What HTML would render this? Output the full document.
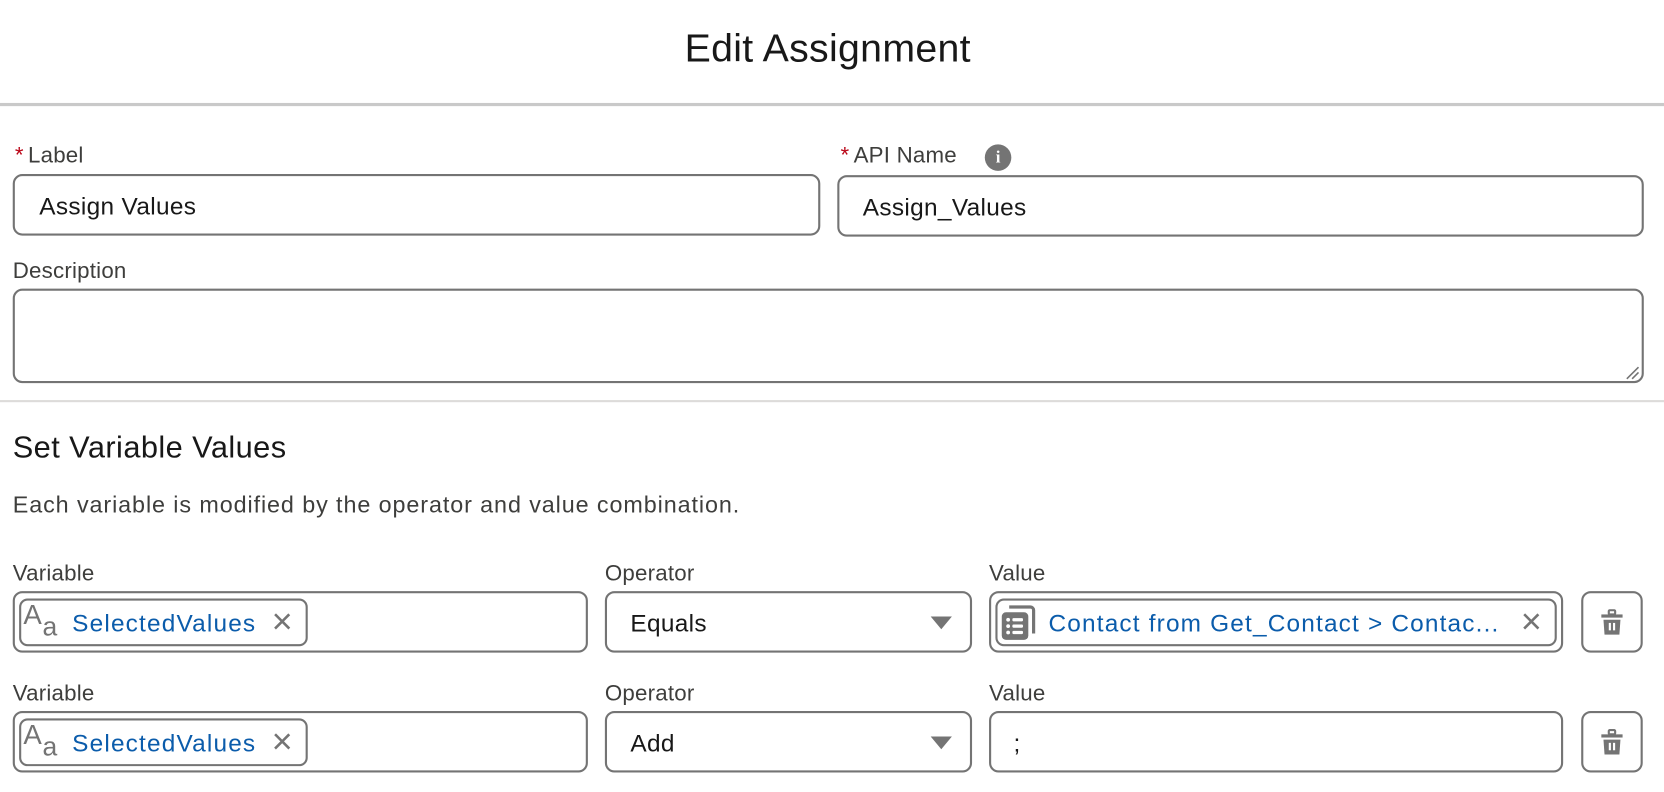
<!DOCTYPE html>
<html><head><meta charset="utf-8"><style>
*{box-sizing:border-box;margin:0;padding:0}
body{width:1664px;height:792px;background:#fff;font-family:"Liberation Sans",Arial,sans-serif;color:#181818;position:relative;overflow:hidden}
#w{position:absolute;left:0;top:0;width:1568px;height:746px;transform:scale(1.0612);transform-origin:0 0}
.a{position:absolute}
.lbl{position:absolute;font-size:21px;color:#3e3e3c;line-height:24px;letter-spacing:0.2px}
.req{color:#ba0517;margin-right:4px}
.box{position:absolute;border:2px solid #747474;border-radius:9px;background:#fff}
.txt{position:absolute;font-size:23px;line-height:26px;color:#181818;letter-spacing:0.3px}
.pill{position:absolute;border:2px solid #747474;border-radius:8px;height:45px}
.blue{color:#0b5cab;font-size:23px;position:absolute;line-height:26px;white-space:nowrap;letter-spacing:1.1px}
.x{position:absolute;font-size:34px;color:#747474;line-height:30px}
.tri{position:absolute;width:0;height:0;border-left:10px solid transparent;border-right:10px solid transparent;border-top:12px solid #747474}
</style></head><body><div id="w">
<div class="a" style="left:0;top:26px;width:1560px;text-align:center;font-size:37px;line-height:40px;color:#181818;letter-spacing:0.3px">Edit Assignment</div>
<div class="a" style="left:0;top:97px;width:1664px;height:3px;background:#c9c9c9"></div>

<div class="lbl" style="left:14px;top:135px"><span class="req">*</span>Label</div>
<div class="box" style="left:12px;top:164px;width:761px;height:58px"></div>
<div class="txt" style="left:37px;top:181px">Assign Values</div>

<div class="lbl" style="left:792px;top:135px"><span class="req">*</span>API Name</div>
<div class="a" style="left:928px;top:136px;width:25px;height:25px;border-radius:50%;background:#747474;color:#fff;font-size:16px;font-weight:bold;text-align:center;line-height:25px;font-family:'Liberation Serif',serif">i</div>
<div class="box" style="left:789px;top:165px;width:760px;height:58px"></div>
<div class="txt" style="left:813px;top:182px">Assign_Values</div>

<div class="lbl" style="left:12px;top:244px">Description</div>
<div class="box" style="left:12px;top:272px;width:1537px;height:89px"></div>
<svg class="a" style="left:1530px;top:343px" width="16" height="16"><path d="M3 14L14 3M8 14L14 8" stroke="#747474" stroke-width="1.5"/></svg>

<div class="a" style="left:0;top:377px;width:1664px;height:2px;background:#dddbda"></div>

<div class="a" style="left:12px;top:405px;font-size:29px;line-height:34px;color:#181818;letter-spacing:0.4px">Set Variable Values</div>
<div class="a" style="left:12px;top:464px;font-size:22px;line-height:24px;color:#3e3e3c;letter-spacing:0.85px;white-space:nowrap">Each variable is modified by the operator and value combination.</div>

<!-- row 1 -->
<div class="lbl" style="left:12px;top:529px">Variable</div>
<div class="box" style="left:12px;top:557px;width:542px;height:58px"></div>
<div class="pill" style="left:18px;top:564px;width:272px"></div>
<div class="a" style="left:22px;top:566px;font-size:26px;color:#747474;line-height:26px">A</div>
<div class="a" style="left:40px;top:578px;font-size:25px;color:#747474;line-height:26px">a</div>
<div class="blue" style="left:68px;top:574px">SelectedValues</div>
<div class="x" style="left:256px;top:571px">×</div>

<div class="lbl" style="left:570px;top:529px">Operator</div>
<div class="box" style="left:570px;top:557px;width:346px;height:58px"></div>
<div class="txt" style="left:594px;top:574px">Equals</div>
<div class="tri" style="left:877px;top:581px"></div>

<div class="lbl" style="left:932px;top:529px">Value</div>
<div class="box" style="left:932px;top:557px;width:541px;height:58px"></div>
<div class="pill" style="left:938px;top:564px;width:529px"></div>
<svg class="a" style="left:942px;top:569px" width="34" height="36" viewBox="0 0 34 36"><path d="M9 3h20a3 3 0 0 1 3 3v22" fill="none" stroke="#747474" stroke-width="3"/><rect x="2" y="8" width="25" height="26" rx="4" fill="#747474"/><g fill="#fff"><circle cx="8" cy="15" r="1.8"/><circle cx="8" cy="21" r="1.8"/><circle cx="8" cy="27" r="1.8"/><rect x="12" y="13.5" width="10" height="3" rx="1"/><rect x="12" y="19.5" width="10" height="3" rx="1"/><rect x="12" y="25.5" width="10" height="3" rx="1"/></g></svg>
<div class="blue" style="left:988px;top:574px">Contact from Get_Contact &gt; Contac...</div>
<div class="x" style="left:1433px;top:571px">×</div>

<div class="box" style="left:1490px;top:557px;width:58px;height:58px"></div>
<svg class="a" style="left:1507px;top:574px" width="24" height="26" viewBox="0 0 24 26"><rect x="9" y="1" width="6" height="4" rx="1" fill="none" stroke="#747474" stroke-width="2"/><rect x="2" y="5" width="20" height="3" fill="#747474"/><path d="M4 10h16l-1 14H5z" fill="#747474"/><rect x="9" y="13" width="2" height="7" fill="#fff"/><rect x="13" y="13" width="2" height="7" fill="#fff"/></svg>

<!-- row 2 -->
<div class="lbl" style="left:12px;top:642px">Variable</div>
<div class="box" style="left:12px;top:670px;width:542px;height:58px"></div>
<div class="pill" style="left:18px;top:677px;width:272px"></div>
<div class="a" style="left:22px;top:679px;font-size:26px;color:#747474;line-height:26px">A</div>
<div class="a" style="left:40px;top:691px;font-size:25px;color:#747474;line-height:26px">a</div>
<div class="blue" style="left:68px;top:687px">SelectedValues</div>
<div class="x" style="left:256px;top:684px">×</div>

<div class="lbl" style="left:570px;top:642px">Operator</div>
<div class="box" style="left:570px;top:670px;width:346px;height:58px"></div>
<div class="txt" style="left:594px;top:687px">Add</div>
<div class="tri" style="left:877px;top:694px"></div>

<div class="lbl" style="left:932px;top:642px">Value</div>
<div class="box" style="left:932px;top:670px;width:541px;height:58px"></div>
<div class="txt" style="left:955px;top:687px">;</div>

<div class="box" style="left:1490px;top:670px;width:58px;height:58px"></div>
<svg class="a" style="left:1507px;top:687px" width="24" height="26" viewBox="0 0 24 26"><rect x="9" y="1" width="6" height="4" rx="1" fill="none" stroke="#747474" stroke-width="2"/><rect x="2" y="5" width="20" height="3" fill="#747474"/><path d="M4 10h16l-1 14H5z" fill="#747474"/><rect x="9" y="13" width="2" height="7" fill="#fff"/><rect x="13" y="13" width="2" height="7" fill="#fff"/></svg>
</div></body></html>
